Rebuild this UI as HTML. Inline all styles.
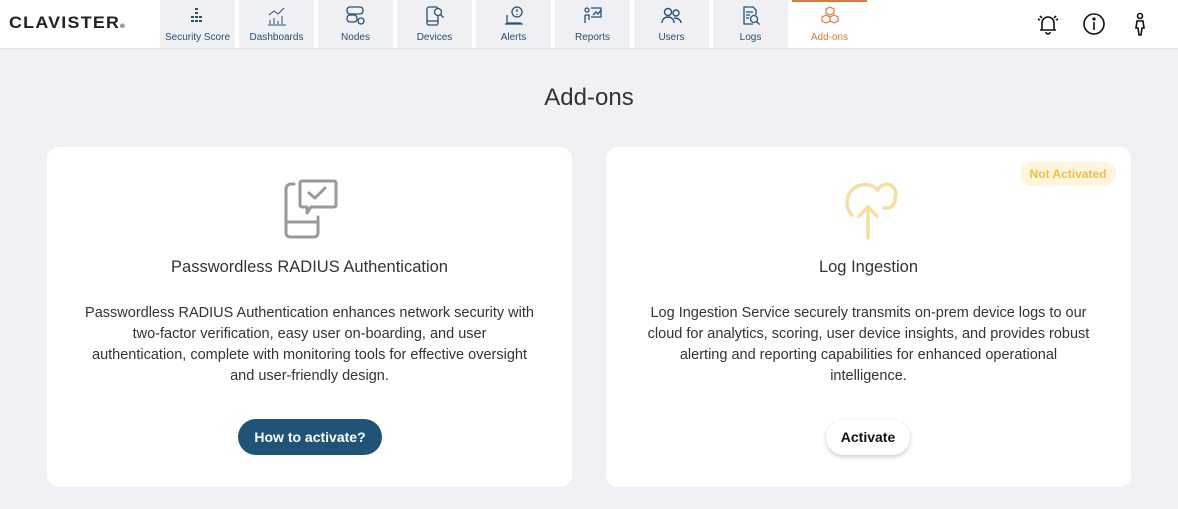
<!DOCTYPE html>
<html><head><meta charset="utf-8"><style>
*{margin:0;padding:0;box-sizing:border-box}
body{width:1178px;height:509px;background:#f0f1f5;font-family:"Liberation Sans",sans-serif;color:#333;position:relative;overflow:hidden}
.hdr{position:absolute;left:0;top:0;width:1178px;height:49px;background:#fff;border-bottom:1px solid #e2e4e8}
.logo{position:absolute;left:9px;top:13px;font-weight:bold;font-size:17px;letter-spacing:1.2px;color:#222;transform:scaleX(1.05);transform-origin:left}
.tab{position:absolute;top:0;width:75px;height:48px;background:#eef0f4;text-align:center;font-size:10px;color:#2a4f73}
.tab svg{position:absolute;left:27px;top:5px}
.tab span{position:absolute;left:0;right:0;top:32px}
.tab.act{background:#fff;color:#e07a3a;border-top:2px solid #e07a3a}
.title{position:absolute;left:0;width:1178px;top:84px;text-align:center;font-size:24px;color:#333}
.card{position:absolute;top:147px;width:525px;height:340px;background:#fff;border-radius:12px}
.card h3{position:absolute;left:0;right:0;top:111px;text-align:center;font-weight:normal;font-size:16.5px}
.card p{position:absolute;top:156px;text-align:center;font-size:14.5px;line-height:21px;white-space:nowrap}
.btn{position:absolute;border-radius:18px;font-size:14px;font-weight:bold;text-align:center;line-height:36px}
</style></head><body>
<div class="hdr">
<div class="logo">CLAVISTER<span style="font-size:6px">®</span></div>
<div class="tab" style="left:160px"><svg width="20" height="22" viewBox="0 0 20 22" fill="#2a4f73"><rect x="8" y="3" width="3" height="2"/><rect x="8" y="7" width="3" height="2"/><rect x="4" y="11" width="3" height="2"/><rect x="8" y="11" width="3" height="2"/><rect x="12" y="11" width="3" height="2"/><rect x="4" y="15" width="3" height="2"/><rect x="8" y="15" width="3" height="2"/><rect x="12" y="15" width="3" height="2"/></svg><span>Security Score</span></div>
<div class="tab" style="left:239px"><svg width="22" height="22" viewBox="0 0 22 22" fill="none" stroke="#2a4f73"><path d="M2 20h18M4 19v-4M8 19v-6M12 19v-3M16 19v-8M3 10l5-4 4 3 6-6"/></svg><span>Dashboards</span></div>
<div class="tab" style="left:318px"><svg width="22" height="22" viewBox="0 0 22 22" fill="none" stroke="#2a4f73" stroke-width="1.3"><rect x="2" y="2" width="16" height="7" rx="3"/><rect x="2" y="10" width="10" height="7" rx="3"/><circle cx="16" cy="16" r="3"/></svg><span>Nodes</span></div>
<div class="tab" style="left:397px"><svg width="22" height="22" viewBox="0 0 22 22" fill="none" stroke="#2a4f73" stroke-width="1.3"><rect x="3" y="2" width="11" height="18" rx="2"/><circle cx="14" cy="7" r="3.5" fill="#eef0f4"/><path d="M16.5 9.5l3 3M3 16h11"/></svg><span>Devices</span></div>
<div class="tab" style="left:476px"><svg width="22" height="22" viewBox="0 0 22 22" fill="none" stroke="#2a4f73" stroke-width="1.3"><path d="M4 10v8h14M2 19h18"/><circle cx="14" cy="7" r="5"/><path d="M14 4v3M14 9v1"/></svg><span>Alerts</span></div>
<div class="tab" style="left:555px"><svg width="22" height="22" viewBox="0 0 22 22" fill="none" stroke="#2a4f73" stroke-width="1.3"><circle cx="5" cy="5" r="2"/><path d="M3 10h4v5M3 10v8M9 3h10v9H9M11 10l3-3 2 2 3-4"/></svg><span>Reports</span></div>
<div class="tab" style="left:634px"><svg width="22" height="22" viewBox="0 0 22 22" fill="none" stroke="#2a4f73" stroke-width="1.4"><circle cx="7" cy="7" r="3.5"/><circle cx="15" cy="8" r="3"/><path d="M1 18c0-4 3-6 6-6s6 2 6 6M13 13c4 0 7 2 7 5"/></svg><span>Users</span></div>
<div class="tab" style="left:713px"><svg width="22" height="22" viewBox="0 0 22 22" fill="none" stroke="#2a4f73" stroke-width="1.3"><path d="M13 19H4V2h9l3 3v5M6 7h7M6 10h4M6 13h3"/><circle cx="14" cy="14" r="3.5"/><path d="M16.5 16.5l3 3"/></svg><span>Logs</span></div>
<div class="tab act" style="left:792px"><svg width="22" height="22" viewBox="0 0 22 22" fill="none" stroke="#e07a3a" stroke-width="1.2" style="top:3px"><path d="M11 2l4 2v4l-4 2-4-2V4zM7 10l4 2v4l-4 2-4-2v-4zM15 10l4 2v4l-4 2-4-2v-4z"/></svg><span style="top:30px">Add-ons</span></div>
<svg style="position:absolute;left:1036px;top:12px" width="24" height="24" viewBox="0 0 24 24" fill="none" stroke="#111" stroke-width="1.6"><path d="M6 18V11a6 6 0 0112 0v7M4 18h16M10 20a2 2 0 004 0M4 4l2 2M20 4l-2 2M2 7l2 1M22 7l-2 1"/></svg>
<svg style="position:absolute;left:1082px;top:12px" width="24" height="24" viewBox="0 0 24 24" fill="none" stroke="#111" stroke-width="1.6"><circle cx="12" cy="12" r="10"/><path d="M12 10v7M11 17h2"/><circle cx="12" cy="7" r="0.8" fill="#111"/></svg>
<svg style="position:absolute;left:1128px;top:12px" width="24" height="24" viewBox="0 0 24 24" fill="none" stroke="#111" stroke-width="1.6"><circle cx="12" cy="4" r="2.5"/><path d="M9 9h6l1 7h-2l-1 7h-2l-1-7H8z"/></svg>
</div>
<div class="title">Add-ons</div>
<div class="card" style="left:47px">
<svg style="position:absolute;left:235px;top:32px" width="58" height="62" viewBox="0 0 58 62" fill="none" stroke="#999" stroke-width="3" stroke-linejoin="round" stroke-linecap="round"><path d="M12 5H9a5 5 0 00-5 5v44a4 4 0 004 4h24a4 4 0 004-4V38M4 43h32"/><path d="M20 2h32a2 2 0 012 2v22a2 2 0 01-2 2H29l-4 6v-6h-5a2 2 0 01-2-2V4a2 2 0 012-2z"/><path d="M27 14l6 5 10-10"/></svg>
<h3>Passwordless RADIUS Authentication</h3>
<p style="left:10px;right:10px">Passwordless RADIUS Authentication enhances network security with<br>two-factor verification, easy user on-boarding, and user<br>authentication, complete with monitoring tools for effective oversight<br>and user-friendly design.</p>
<div class="btn" style="left:191px;top:272px;width:144px;background:#1f5478;color:#fff">How to activate?</div>
</div>
<div class="card" style="left:606px">
<div style="position:absolute;left:414px;top:15px;width:96px;height:24px;border-radius:12px;background:#fdf5dc;color:#eac24a;font-weight:bold;font-size:12px;text-align:center;line-height:24px">Not Activated</div>
<svg style="position:absolute;left:232px;top:30px" width="62" height="64" viewBox="0 0 62 64" fill="none" stroke="#f6df9e" stroke-width="3.5" stroke-linecap="round"><path d="M14 38A13 13 0 1140 13a9 9 0 0117 7 9 9 0 01-7 11h-4"/><path d="M30 61V30M21 39l9-9 9 9"/></svg>
<h3>Log Ingestion</h3>
<p style="left:10px;right:10px">Log Ingestion Service securely transmits on-prem device logs to our<br>cloud for analytics, scoring, user device insights, and provides robust<br>alerting and reporting capabilities for enhanced operational<br>intelligence.</p>
<div class="btn" style="left:220px;top:273px;width:84px;height:35px;line-height:35px;background:#fff;color:#111;box-shadow:0 2px 5px rgba(0,0,0,.2)">Activate</div>
</div>
</body></html>
